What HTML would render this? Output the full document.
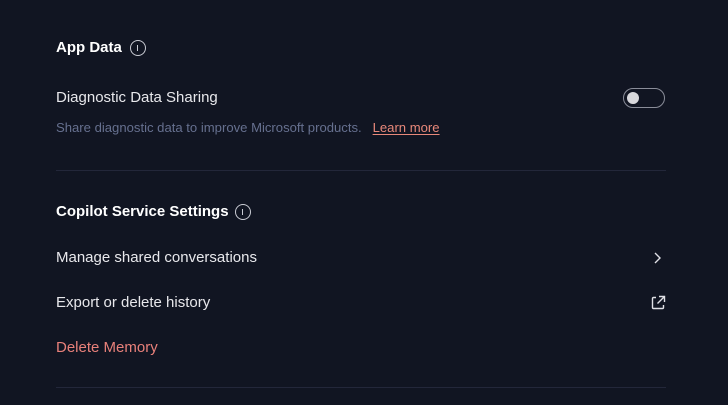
<!DOCTYPE html>
<html><head><style>
html,body{margin:0;padding:0;width:728px;height:405px;background:#111522;overflow:hidden;font-family:"Liberation Sans",sans-serif;}
.t{position:absolute;white-space:nowrap;}
.h{font-weight:bold;font-size:15px;color:#fff;}
.r{font-size:15px;color:#e8e8ec;}
.s{font-size:13.1px;color:#66708f;}
.line{position:absolute;left:56px;width:610px;height:1px;background:#23273a;}
.info{position:absolute;width:16px;height:16px;border:1.3px solid #c9cbd3;border-radius:50%;box-sizing:border-box;}
.info:after{content:"";position:absolute;left:6px;top:3.5px;width:1.4px;height:6.5px;background:#c9cbd3;}
</style></head><body>
<div class="t h" style="left:56px;top:39px;">App Data</div>
<div class="info" style="left:130px;top:40px;"></div>
<div class="t r" style="left:56px;top:89px;">Diagnostic Data Sharing</div>
<div style="position:absolute;left:623px;top:88px;width:42px;height:20px;border:1.5px solid #8a8d99;border-radius:11px;box-sizing:border-box;"></div>
<div style="position:absolute;left:627px;top:92px;width:12px;height:12px;border-radius:50%;background:#d8d8dc;"></div>
<div class="t s" style="left:56px;top:120px;">Share diagnostic data to improve Microsoft products.&nbsp;&nbsp;&nbsp;<span style="color:#e8887a;text-decoration:underline;text-underline-offset:2px;">Learn more</span></div>
<div class="line" style="top:170px;"></div>
<div class="t h" style="left:56px;top:203px;">Copilot Service Settings</div>
<div class="info" style="left:235px;top:204px;"></div>
<div class="t r" style="left:56px;top:249px;">Manage shared conversations</div>
<svg style="position:absolute;left:651px;top:251px" width="12" height="14" viewBox="0 0 12 14"><path d="M4 2l5 5-5 5" fill="none" stroke="#e0e0e6" stroke-width="1.4"/></svg>
<div class="t r" style="left:56px;top:294px;">Export or delete history</div>
<svg style="position:absolute;left:650px;top:295px" width="16" height="16" viewBox="0 0 16 16"><path d="M6 2.5H3.5a1 1 0 0 0-1 1v9a1 1 0 0 0 1 1h9a1 1 0 0 0 1-1V10M9 1.5h5.5V7M14.5 1.5L7.5 8.5" fill="none" stroke="#e0e0e6" stroke-width="1.4"/></svg>
<div class="t r" style="left:56px;top:339px;color:#e8807a;">Delete Memory</div>
<div class="line" style="top:387px;"></div>
</body></html>
